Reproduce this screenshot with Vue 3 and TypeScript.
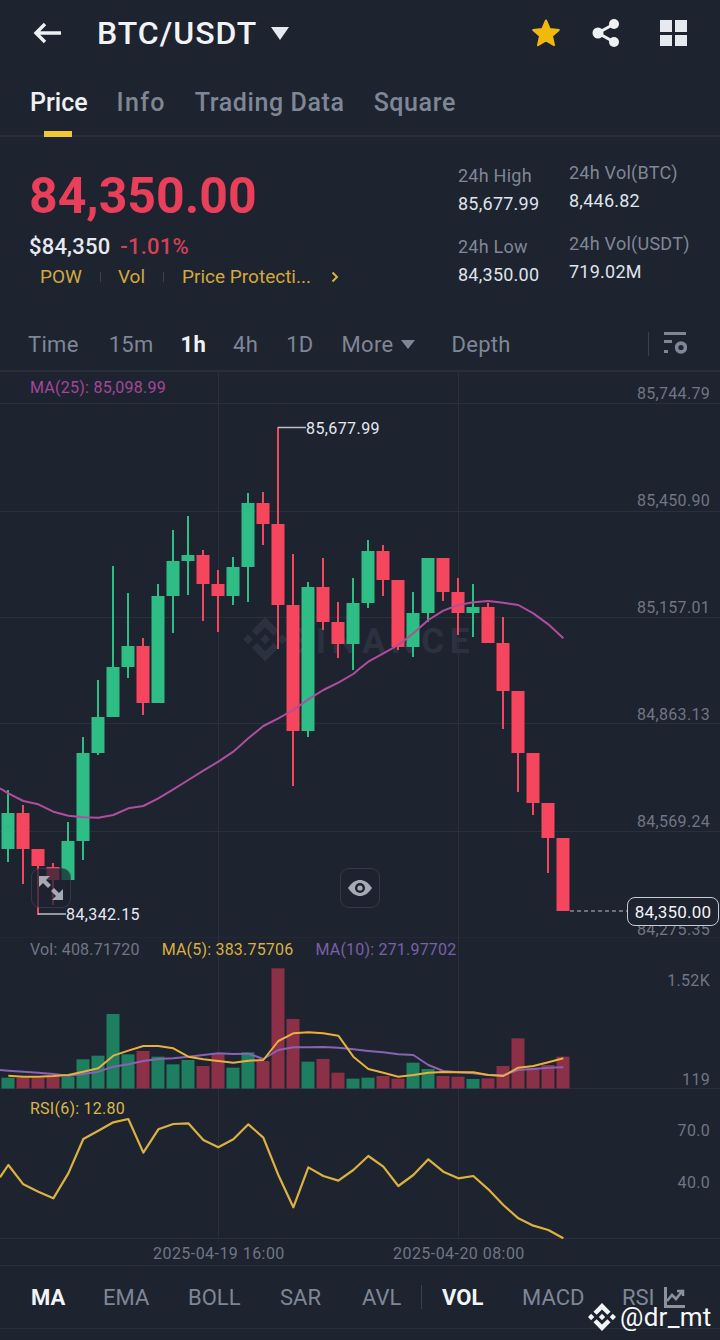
<template>
  <div class="page">
    <header class="topbar">
      <svg class="back" width="30" height="24" viewBox="0 0 30 24">
        <path d="M29 12H4M13 3l-9 9 9 9" fill="none" stroke="#eef0f4" stroke-width="3.4" />
      </svg>
      <span class="pair">BTC/USDT</span>
      <span class="pair-caret"></span>
      <div class="top-actions">
        <svg width="30" height="30" viewBox="0 0 30 30">
          <path
            d="M15 2.5l3.8 8.6 9 .9-6.8 6 2 9.2-8-4.7-8 4.7 2-9.2-6.8-6 9-.9z"
            fill="#f0b90b"
            stroke="#f0b90b"
            stroke-width="2"
            stroke-linejoin="round"
          />
        </svg>
        <svg width="30" height="30" viewBox="0 0 30 30">
          <path d="M23 6L7 15l16 9" fill="none" stroke="#eef0f4" stroke-width="3" />
          <circle cx="23" cy="6" r="5" fill="#eef0f4" />
          <circle cx="7" cy="15" r="5.5" fill="#eef0f4" />
          <circle cx="23" cy="24" r="5" fill="#eef0f4" />
        </svg>
        <svg class="grid-icon" width="27" height="26" viewBox="0 0 27 26">
          <rect x="0" y="0" width="12" height="12" fill="#e6e9ef" />
          <rect x="15" y="0" width="12" height="12" fill="#e6e9ef" />
          <rect x="0" y="15" width="12" height="11" fill="#e6e9ef" />
          <rect x="15" y="15" width="12" height="11" fill="#e6e9ef" />
        </svg>
      </div>
    </header>

    <nav class="tabs">
      <span v-for="t in pageTabs" :key="t" class="tab" :class="{ active: t === 'Price' }">{{ t }}</span>
    </nav>

    <section class="summary">
      <div class="summary-main">
        <div class="last-price">84,350.00</div>
        <div class="sub-price"><span class="usd">$84,350</span><span class="change">-1.01%</span></div>
        <div class="chips">
          <span class="chip-pow">POW</span>
          <i class="chip-sep"></i>
          <span class="chip-vol">Vol</span>
          <i class="chip-sep"></i>
          <span>Price Protecti...</span>
          <svg class="chip-arrow" width="8" height="12" viewBox="0 0 8 12">
            <path d="M1.5 1.5L6 6l-4.5 4.5" fill="none" stroke="#e0b13a" stroke-width="2" />
          </svg>
        </div>
      </div>
      <div class="stats stats-a">
        <div class="stat"><label>24h High</label><b>85,677.99</b></div>
        <div class="stat"><label>24h Low</label><b>84,350.00</b></div>
      </div>
      <div class="stats stats-b">
        <div class="stat"><label>24h Vol(BTC)</label><b>8,446.82</b></div>
        <div class="stat"><label>24h Vol(USDT)</label><b>719.02M</b></div>
      </div>
    </section>

    <div class="intervals">
      <span v-for="i in intervals" :key="i" class="interval" :class="{ active: i === '1h' }">{{ i }}</span>
      <span class="interval more">More<i class="more-caret"></i></span>
      <span class="interval depth">Depth</span>
      <i class="interval-sep"></i>
      <svg width="24" height="24" viewBox="0 0 24 24">
        <rect x="1" y="0" width="22" height="3" fill="#7f8796" />
        <rect x="1" y="8" width="8" height="3" fill="#7f8796" />
        <rect x="1" y="18" width="4" height="3" fill="#7f8796" />
        <circle cx="18" cy="15.5" r="4.4" fill="none" stroke="#7f8796" stroke-width="3.6" />
      </svg>
    </div>

    <div class="panel panel-main">
      <svg class="plot" width="720" height="566" viewBox="0 372 720 566">
        <g class="grid">
          <line v-for="y in mainGrid" :key="y" x1="0" x2="720" :y1="y" :y2="y" />
          <line x1="218.5" x2="218.5" y1="372" y2="938" />
          <line x1="458.5" x2="458.5" y1="372" y2="938" />
        </g>
        <g class="watermark">
          <path transform="translate(243 617) scale(1.85)" :d="logoPath" />
          <text x="288" y="653">BINANCE</text>
        </g>
        <g v-for="(c, i) in candles" :key="i" :fill="c.up ? GREEN : RED">
          <rect :x="xOf(i) - 1" :y="c.hi" width="2" :height="c.lo - c.hi" />
          <rect :x="xOf(i) - 6.5" :y="c.top" width="13" :height="c.bot - c.top" />
        </g>
        <polyline class="line" :points="ma25" stroke="#b04d9d" stroke-width="2" />
        <path d="M278 427.5H306M38 914H66" stroke="#b9bec7" stroke-width="1.5" fill="none" />
        <text class="mark" x="306" y="434">85,677.99</text>
        <text class="mark" x="66" y="920">84,342.15</text>
        <text v-for="a in mainAxis" :key="a.label" class="axis" x="710" :y="a.y">{{ a.label }}</text>
        <path d="M570 911H627" stroke="#b9bec7" stroke-width="1.2" stroke-dasharray="4 3" />
      </svg>
      <div class="legend legend-ma">MA(25): 85,098.99</div>
      <div class="price-tag">84,350.00</div>
      <button class="float-btn btn-expand">
        <svg width="28" height="28" viewBox="0 0 28 28">
          <path d="M2 2h11l-4 4 5 5-3 3-5-5-4 4zM26 26H15l4-4-5-5 3-3 5 5 4-4z" fill="#a4a9b2" />
        </svg>
      </button>
      <button class="float-btn btn-eye">
        <svg width="26" height="18" viewBox="0 0 26 18">
          <path d="M1 9C5 3 9 1 13 1s8 2 12 8c-4 6-8 8-12 8S5 15 1 9z" fill="#a4a9b2" />
          <circle cx="13" cy="9" r="5" fill="#1e2330" />
          <circle cx="13" cy="9" r="2.6" fill="#a4a9b2" />
        </svg>
      </button>
    </div>

    <div class="panel panel-vol">
      <svg class="plot" width="720" height="151" viewBox="0 938 720 151">
        <g class="grid">
          <line x1="0" x2="720" y1="1088.5" y2="1088.5" />
          <line x1="218.5" x2="218.5" y1="938" y2="1089" />
          <line x1="458.5" x2="458.5" y1="938" y2="1089" />
        </g>
        <rect
          v-for="(v, i) in volumes"
          :key="i"
          :x="xOf(i) - 6.5"
          :y="v"
          width="13"
          :height="1088.5 - v"
          :fill="candles[i].up ? VOL_GREEN : VOL_RED"
        />
        <polyline class="line" :points="volMa10" stroke="#8a62b4" stroke-width="2" />
        <polyline class="line" :points="volMa5" stroke="#e9b13c" stroke-width="2" />
        <text class="axis" x="710" y="986">1.52K</text>
        <text class="axis" x="710" y="1085">119</text>
      </svg>
      <div class="legend legend-vol">
        <span class="c-vol">Vol: 408.71720</span>
        <span class="c-ma5">MA(5): 383.75706</span>
        <span class="c-ma10">MA(10): 271.97702</span>
      </div>
    </div>

    <div class="panel panel-rsi">
      <svg class="plot" width="720" height="150" viewBox="0 1089 720 150">
        <g class="grid">
          <line x1="0" x2="720" y1="1238.5" y2="1238.5" />
          <line x1="218.5" x2="218.5" y1="1089" y2="1239" />
          <line x1="458.5" x2="458.5" y1="1089" y2="1239" />
        </g>
        <polyline class="line" :points="rsi" stroke="#dcb23f" stroke-width="2.2" />
        <text class="axis" x="710" y="1136">70.0</text>
        <text class="axis" x="710" y="1188">40.0</text>
      </svg>
      <div class="legend legend-rsi">RSI(6): 12.80</div>
    </div>

    <div class="dates">
      <span class="date-a">2025-04-19 16:00</span>
      <span class="date-b">2025-04-20 08:00</span>
    </div>

    <nav class="indicators">
      <span
        v-for="ind in indicators"
        :key="ind.name"
        class="indicator"
        :class="{ active: ind.active }"
        :style="{ width: ind.width + 'px' }"
      >{{ ind.name }}</span>
      <i class="indicator-sep"></i>
      <span
        v-for="ind in subIndicators"
        :key="ind.name"
        class="indicator"
        :class="{ active: ind.active }"
        :style="{ width: ind.width + 'px' }"
      >{{ ind.name }}</span>
      <svg class="indicator-icon" width="21" height="21" viewBox="0 0 21 21">
        <path d="M1.5 0v19.5H21" fill="none" stroke="#8b929e" stroke-width="3" />
        <path d="M3 14l5-6 4 4 7-9M13 4h6v5" fill="none" stroke="#8b929e" stroke-width="2.6" />
      </svg>
    </nav>

    <div class="credit">
      <svg width="28" height="28" viewBox="0 0 24 24"><path :d="logoPath" fill="#f4f5f7" /></svg>
      <span>@dr_mt</span>
    </div>
  </div>
</template>

<script setup lang="ts">
interface Candle {
  up: boolean
  hi: number
  top: number
  bot: number
  lo: number
}

const GREEN = '#2ebd85'
const RED = '#f6465d'
const VOL_GREEN = '#1e7f60'
const VOL_RED = '#8c3048'

const logoPath =
  'M7.4 10.1 12 5.5l4.6 4.6 2.7-2.7L12 0 4.7 7.4zM0 12l2.7-2.7L5.4 12l-2.7 2.7zM9.3 12 12 9.3l2.7 2.7-2.7 2.7zM18.6 12l2.7-2.7L24 12l-2.7 2.7zM7.4 13.9 12 18.5l4.6-4.6 2.7 2.7L12 24l-7.3-7.4z'

const pageTabs = ['Price', 'Info', 'Trading Data', 'Square']
const intervals = ['Time', '15m', '1h', '4h', '1D']

const indicators = [
  { name: 'MA', width: 72, active: true },
  { name: 'EMA', width: 85 },
  { name: 'BOLL', width: 92 },
  { name: 'SAR', width: 82 },
  { name: 'AVL', width: 59 },
]
const subIndicators = [
  { name: 'VOL', width: 80, active: true },
  { name: 'MACD', width: 100 },
  { name: 'RSI', width: 42 },
]

const mainGrid = [403.5, 511.5, 617.5, 723.5, 831.5, 938]
const mainAxis = [
  { label: '85,744.79', y: 399 },
  { label: '85,450.90', y: 506 },
  { label: '85,157.01', y: 613 },
  { label: '84,863.13', y: 720 },
  { label: '84,569.24', y: 827 },
  { label: '84,275.35', y: 935 },
]

// [up, high, bodyTop, bodyBottom, low], read off the reference per candle
const raw: [number, number, number, number, number][] = [
  [1, 790, 813, 849, 862], [0, 805, 813, 849, 884], [0, 849, 849, 866, 915], [0, 863, 867, 880, 905],
  [1, 822, 841, 880, 880], [1, 737, 753, 841, 860], [1, 680, 717, 753, 755], [1, 566, 667, 717, 717],
  [1, 593, 646, 667, 678], [0, 638, 646, 703, 715], [1, 584, 596, 703, 703], [1, 530, 561, 596, 633],
  [1, 516, 555, 561, 595], [0, 550, 555, 584, 621], [0, 570, 584, 596, 632], [1, 557, 567, 596, 605],
  [1, 493, 503, 567, 602], [0, 492, 503, 524, 545], [0, 427, 524, 605, 649], [0, 554, 605, 731, 786],
  [1, 582, 587, 731, 737], [0, 558, 587, 622, 630], [0, 602, 622, 644, 658], [1, 578, 603, 644, 670],
  [1, 540, 551, 603, 608], [0, 545, 551, 580, 596], [0, 580, 580, 647, 650], [1, 592, 613, 647, 657],
  [1, 558, 558, 613, 622], [0, 558, 558, 592, 601], [0, 578, 592, 613, 635], [1, 584, 607, 613, 637],
  [0, 603, 607, 643, 643], [0, 617, 643, 691, 729], [0, 691, 691, 753, 792], [0, 753, 753, 803, 815],
  [0, 803, 803, 838, 873], [0, 838, 838, 911, 911],
]

const candles: Candle[] = raw.map(([up, hi, top, bot, lo]) => ({ up: up === 1, hi, top, bot, lo }))

const xOf = (i: number) => 8 + i * 15

// reference crops were read at 3x, so these helpers scale them back to page coordinates
const toPoints = (pts: [number, number][], xBase: number, yBase: number) =>
  pts.map(([x, y]) => `${xBase + x / 3},${yBase + y / 3}`).join(' ')

const ma25 =
  toPoints(
    [[0, 355], [25, 370], [70, 393], [115, 403], [160, 425], [205, 437], [250, 442], [295, 443], [340, 435],
      [385, 415], [430, 408], [475, 385], [520, 358], [565, 330], [610, 302], [655, 275], [700, 245], [745, 205],
      [790, 168], [835, 145], [880, 120], [925, 88], [970, 60], [1015, 38], [1060, 12]], 0, 670) +
  ' ' +
  toPoints(
    [[0, 895], [25, 875], [70, 850], [115, 825], [160, 790], [205, 750], [250, 722], [295, 705], [340, 697],
      [385, 693], [430, 698], [475, 705], [520, 730], [565, 763], [610, 805]], 360, 370)

const volTops = [
  428, 428, 428, 425, 425, 373, 362, 237, 358, 348, 365, 388, 375, 393, 355, 398, 352, 378, 100, 252, 380, 372, 413, 431,
  428, 423, 431, 383, 402, 423, 425, 432, 430, 393, 310, 398, 390, 365,
]
const volumes = volTops.map((y) => 935 + y / 3)

const volMa5 =
  toPoints(
    [[25, 422], [70, 425], [115, 425], [160, 423], [205, 420], [250, 410], [295, 400], [340, 362], [385, 347], [430, 333],
      [475, 333], [520, 340], [565, 365], [610, 373], [655, 378], [700, 383], [745, 377], [790, 375], [835, 318], [880, 295],
      [925, 292], [970, 295], [1015, 302], [1060, 365]], 0, 935) +
  ' ' +
  toPoints(
    [[25, 402], [70, 413], [115, 425], [160, 420], [205, 413], [250, 411], [295, 412], [340, 412], [385, 420], [430, 423],
      [475, 398], [520, 393], [565, 382], [610, 370]], 360, 935)

const volMa10 =
  toPoints(
    [[0, 405], [25, 407], [70, 410], [115, 413], [160, 417], [205, 422], [250, 417], [295, 410], [340, 395], [385, 388],
      [430, 378], [475, 372], [520, 370], [565, 365], [610, 360], [655, 355], [700, 357], [745, 356], [790, 372], [835, 345],
      [880, 337], [925, 337], [970, 336], [1015, 338], [1060, 343]], 0, 935) +
  ' ' +
  toPoints(
    [[25, 348], [70, 352], [115, 358], [160, 360], [205, 390], [250, 408], [295, 412], [340, 415], [385, 420], [430, 420],
      [475, 405], [520, 402], [565, 398], [610, 397]], 360, 935)

const rsi =
  toPoints(
    [[0, 262], [25, 225], [70, 283], [115, 305], [160, 325], [205, 250], [250, 147], [295, 122], [340, 97], [385, 87],
      [430, 188], [475, 118], [520, 102], [565, 100], [610, 150], [655, 172], [700, 148], [745, 103], [790, 143], [835, 255],
      [880, 352], [925, 232], [970, 258], [1015, 272], [1060, 240]], 0, 1090) +
  ' ' +
  toPoints(
    [[25, 198], [70, 230], [115, 288], [160, 255], [205, 208], [250, 245], [295, 265], [340, 258], [385, 298], [430, 345],
      [475, 385], [520, 407], [565, 420], [610, 445]], 360, 1090)
</script>

<style>
html,
body {
  margin: 0;
  background: #1e2330;
}
</style>

<style scoped>
.page {
  width: 720px;
  height: 1340px;
  overflow: hidden;
  position: relative;
  display: flex;
  flex-direction: column;
  background: #1e2330;
  font-family: Roboto, 'Noto Sans', sans-serif;
  color: #7f8796;
}

.topbar {
  height: 66px;
  display: flex;
  align-items: center;
  padding: 0 33px 0 32px;
}

.back {
  margin-right: 35px;
}

.pair {
  font-size: 32px;
  font-weight: 500;
  color: #f1f3f6;
  letter-spacing: 1px;
}

.pair-caret {
  margin-left: 14px;
  border-left: 9px solid transparent;
  border-right: 9px solid transparent;
  border-top: 13px solid #e6e9ef;
}

.top-actions {
  margin-left: auto;
  display: flex;
  align-items: center;
  gap: 30px;
}

.grid-icon {
  margin-left: 9px;
}

.tabs {
  height: 71px;
  box-sizing: border-box;
  border-bottom: 2px solid #292e3a;
  display: flex;
  gap: 29px;
  padding: 20px 0 0 30px;
  font-size: 25px;
  font-weight: 500;
  line-height: 34px;
  letter-spacing: 0.6px;
}

.tab {
  position: relative;
  height: 49px;
}

.tab:nth-child(2) {
  letter-spacing: 1.3px;
}

.tab.active {
  color: #eef0f4;
  letter-spacing: 0;
}

.tab.active::after {
  content: '';
  position: absolute;
  left: 14px;
  bottom: -2px;
  width: 28px;
  height: 6px;
  background: #f3c730;
}

.summary {
  height: 185px;
  box-sizing: border-box;
  display: flex;
  padding-left: 29px;
}

.summary-main {
  width: 429px;
  flex: none;
}

.last-price {
  margin-top: 31px;
  font-size: 50px;
  font-weight: 700;
  line-height: 56px;
  color: #ea3f5b;
}

.sub-price {
  margin-top: 10px;
  display: flex;
  gap: 10px;
  font-size: 22px;
  font-weight: 500;
  line-height: 26px;
  letter-spacing: 0.2px;
}

.usd {
  color: #e6e9ef;
}

.change {
  color: #d63f57;
}

.chips {
  margin-top: 4px;
  padding-left: 11px;
  display: flex;
  align-items: center;
  font-size: 19px;
  line-height: 26px;
  color: #d3a93b;
}

.chip-sep {
  width: 1px;
  height: 10px;
  margin: 0 18px;
  background: #3b404c;
}

.chip-vol {
  margin-left: -1px;
}

.chip-arrow {
  margin-left: 20px;
}

.stats {
  width: 111px;
  flex: none;
  letter-spacing: 0.25px;
}

.stats-a {
  padding-top: 27px;
}

.stats-b {
  padding-top: 24px;
}

.stat {
  height: 71px;
  display: flex;
  flex-direction: column;
  font-size: 18px;
}

.stat label {
  line-height: 24px;
  white-space: nowrap;
}

.stat b {
  margin-top: 4px;
  font-weight: 400;
  line-height: 24px;
  color: #dfe3ea;
}

.intervals {
  height: 50px;
  box-sizing: border-box;
  border-bottom: 2px solid #292e3a;
  display: flex;
  align-items: center;
  padding: 0 33px 4px 28px;
  font-size: 22px;
  letter-spacing: 0.3px;
}

.interval {
  margin-right: 28px;
}

.interval:first-child {
  margin-right: 30px;
}

.interval:nth-child(2) {
  margin-right: 27px;
}

.interval.active {
  color: #f1f3f6;
  font-weight: 700;
  margin-right: 27px;
}

.more {
  display: flex;
  align-items: center;
  margin-right: 36px;
}

.more-caret {
  margin-left: 8px;
  border-left: 7px solid transparent;
  border-right: 7px solid transparent;
  border-top: 9px solid #7f8796;
}

.depth {
  margin-right: auto;
}

.interval-sep {
  width: 1px;
  height: 24px;
  margin-right: 14px;
  background: #3b404c;
}

.panel {
  position: relative;
  flex: none;
}

.panel-main {
  height: 566px;
}

.panel-vol {
  height: 151px;
}

.panel-rsi {
  height: 150px;
}

.plot {
  display: block;
}

.grid line {
  stroke: #2a2f3b;
  stroke-width: 1;
}

.watermark {
  fill: #2c3140;
}

.watermark text {
  font-size: 35px;
  font-weight: 700;
  letter-spacing: 5.5px;
}

.line {
  fill: none;
  stroke-linejoin: round;
}

.axis {
  fill: #6f7684;
  font-size: 16px;
  letter-spacing: 0.3px;
  text-anchor: end;
}

.mark {
  fill: #e6e9ef;
  font-size: 16px;
  letter-spacing: 0.4px;
}

.legend {
  position: absolute;
  left: 30px;
  font-size: 16px;
  letter-spacing: 0.25px;
  line-height: 20px;
  white-space: nowrap;
}

.legend-ma {
  top: 6px;
  color: #a4479a;
}

.legend-vol {
  top: 2px;
  display: flex;
  gap: 22px;
  letter-spacing: 0.2px;
}

.c-vol {
  color: #6f7684;
}

.c-ma5 {
  color: #d9b13c;
}

.c-ma10 {
  color: #7a60a6;
}

.legend-rsi {
  top: 10px;
  color: #d9b84a;
}

.price-tag {
  position: absolute;
  left: 627px;
  top: 525px;
  width: 92px;
  height: 29px;
  box-sizing: border-box;
  border: 1.5px solid #c6cad2;
  border-radius: 8px;
  background: #1e2330;
  color: #f1f3f6;
  font-size: 17px;
  letter-spacing: 0.2px;
  line-height: 28px;
  text-align: center;
}

.float-btn {
  position: absolute;
  top: 496px;
  width: 40px;
  height: 40px;
  padding: 0;
  border: 1.5px solid rgba(255, 255, 255, 0.1);
  border-radius: 9px;
  background: rgba(30, 35, 48, 0.72);
  display: flex;
  align-items: center;
  justify-content: center;
}

.btn-expand {
  left: 31px;
}

.btn-eye {
  left: 340px;
}

.dates {
  height: 27px;
  box-sizing: border-box;
  border-bottom: 1px solid #292e3a;
  position: relative;
  font-size: 16px;
  letter-spacing: 0.45px;
  line-height: 30px;
  color: #6f7684;
}

.date-a,
.date-b {
  position: absolute;
  top: 0;
}

.date-a {
  left: 153px;
}

.date-b {
  left: 393px;
}

.indicators {
  height: 63px;
  box-sizing: border-box;
  border-bottom: 1px solid #292e3a;
  display: flex;
  align-items: center;
  padding-left: 31px;
  font-size: 22px;
}

.indicator {
  flex: none;
  white-space: nowrap;
}

.indicator.active {
  color: #f1f3f6;
  font-weight: 700;
}

.indicator-sep {
  width: 1px;
  height: 24px;
  margin-right: 20px;
  background: #3b404c;
}

.credit {
  position: absolute;
  left: 588px;
  top: 1303px;
  display: flex;
  align-items: center;
  gap: 4px;
  color: #f7f8fa;
  font-size: 26px;
  letter-spacing: 0.3px;
  line-height: 28px;
}
</style>
